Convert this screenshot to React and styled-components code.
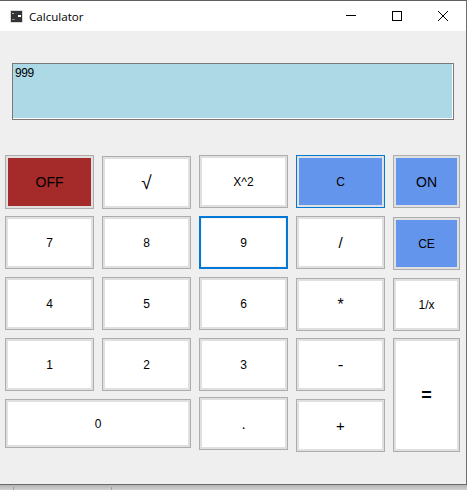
import React from 'react'
import styled, { createGlobalStyle } from 'styled-components'

const GlobalStyle = createGlobalStyle`
  html, body {
    margin: 0;
    padding: 0;
    background: #cfcfcf;
    overflow: hidden;
  }
`

const Page = styled.div`
  width: 467px;
  height: 490px;
  display: flex;
  flex-direction: column;
`

const Window = styled.div`
  height: 485px;
  box-sizing: border-box;
  background: #efefef;
  border-top: 1px solid #5f5f5f;
  border-right: 1px solid #6e6e6e;
  border-bottom: 1px solid #6a6a6a;
  display: flex;
  flex-direction: column;
`

const TitleBar = styled.div`
  height: 30px;
  flex: none;
  background: #fff;
  display: flex;
  align-items: center;
  padding-left: 10px;
`

const AppIcon = styled.svg`
  width: 13px;
  height: 13px;
`

const Title = styled.span`
  margin-left: 6px;
  font: 11.6px 'Open Sans', 'Liberation Sans', sans-serif;
  color: #000;
`

const WindowControls = styled.div`
  margin-left: auto;
  display: flex;
  height: 100%;
`

const ControlButton = styled.div`
  width: 46px;
  display: flex;
  align-items: center;
  justify-content: center;
`

const Content = styled.div`
  flex: 1;
  padding: 32px 0 0 5px;
`

const Display = styled.div`
  margin-left: 7px;
  width: 442px;
  height: 57px;
  box-sizing: border-box;
  border: 1px solid #7a7a7a;
  box-shadow: inset -1px -1px 0 #fff;
  background: #add8e6;
  padding: 2px;
  font: 12px/14px 'Liberation Sans', Arial, sans-serif;
  letter-spacing: -0.4px;
  color: #000;
`

const Keypad = styled.div`
  margin-top: 35px;
  display: grid;
  grid-template-columns: 89px 89px 89px 89px 67px;
  grid-auto-rows: 53px;
  gap: 8px;
`

const Key = styled.button`
  box-sizing: border-box;
  padding: 0;
  margin: ${(p) => p.$nudge || 0}px 0 0;
  height: ${(p) => p.$height || 53}px;
  grid-column: span ${(p) => p.$cols || 1};
  grid-row: span ${(p) => p.$rows || 1};
  background: ${(p) => p.$bg || '#fff'};
  border: ${(p) => (p.$focus === 'strong' ? '2px solid #0078d7' : p.$focus ? '1px solid #0078d7' : '1px solid #adadad')};
  box-shadow: inset 0 0 0 ${(p) => (p.$focus === 'strong' ? '1px #f4f4f4' : '2px #e0e0e0')};
  font-family: 'Liberation Sans', Arial, sans-serif;
  font-size: ${(p) => p.$size || 12}px;
  font-weight: ${(p) => (p.$bold ? 700 : 400)};
  color: #000;
`

const Shadow = styled.div`
  flex: 1;
  display: flex;
  background: linear-gradient(#b4b4b4, #d2d2d2);
  padding-left: 13px;
  gap: 97px;
`

const Tick = styled.i`
  width: 1px;
  margin-top: 2px;
  background: #a0a0a0;
`

const keys = [
  { label: 'OFF', bg: '#a52a2a', size: 14, height: 54 },
  { label: '√', size: 19, nudge: 1 },
  { label: 'X^2' },
  { label: 'C', bg: '#6495ed', focus: 'thin' },
  { label: 'ON', bg: '#6495ed', size: 14 },
  { label: '7' },
  { label: '8' },
  { label: '9', focus: 'strong' },
  { label: '/', size: 15 },
  { label: 'CE', bg: '#6495ed', nudge: 1 },
  { label: '4' },
  { label: '5' },
  { label: '6' },
  { label: '*', size: 16, nudge: 1 },
  { label: '1/x', nudge: 1 },
  { label: '1' },
  { label: '2' },
  { label: '3' },
  { label: '-', size: 17 },
  { label: '=', size: 18, bold: true, rows: 2, height: 114 },
  { label: '0', cols: 2, height: 49 },
  { label: '.', size: 15, nudge: -2 },
  { label: '+', size: 15 },
]

export default function App() {
  return (
    <Page>
      <GlobalStyle />
      <Window>
        <TitleBar>
          <AppIcon viewBox="0 0 13 13">
            <rect x="0" y="0" width="13" height="13" rx="1" fill="#d8d8d8" />
            <rect x="1" y="1" width="11" height="11" fill="#333" />
            <rect x="2" y="3" width="2" height="1" fill="#bbb" />
            <rect x="8" y="5" width="3" height="2" fill="#fff" />
            <rect x="2" y="9" width="3" height="1" fill="#888" />
          </AppIcon>
          <Title>Calculator</Title>
          <WindowControls>
            <ControlButton>
              <svg width="10" height="10" viewBox="0 0 10 10"><path d="M0 4.5H10" stroke="#000" fill="none" /></svg>
            </ControlButton>
            <ControlButton>
              <svg width="10" height="10" viewBox="0 0 10 10"><rect x="0.5" y="0.5" width="9" height="9" stroke="#000" fill="none" /></svg>
            </ControlButton>
            <ControlButton>
              <svg width="10" height="10" viewBox="0 0 10 10"><path d="M0 0L10 10M10 0L0 10" stroke="#000" fill="none" /></svg>
            </ControlButton>
          </WindowControls>
        </TitleBar>
        <Content>
          <Display>999</Display>
          <Keypad>
            {keys.map((k) => (
              <Key
                key={k.label}
                $bg={k.bg}
                $size={k.size}
                $height={k.height}
                $nudge={k.nudge}
                $focus={k.focus}
                $bold={k.bold}
                $cols={k.cols}
                $rows={k.rows}
              >
                {k.label}
              </Key>
            ))}
          </Keypad>
        </Content>
      </Window>
      <Shadow>
        <Tick />
        <Tick />
      </Shadow>
    </Page>
  )
}
